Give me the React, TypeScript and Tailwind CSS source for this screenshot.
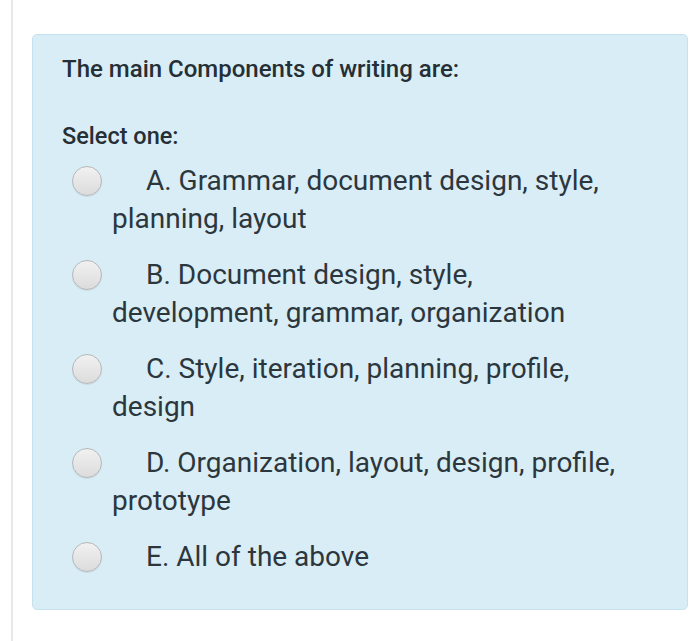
import React from 'react';

const OPTIONS = [
  { letter: 'A.', text: 'Grammar, document design, style, planning, layout' },
  { letter: 'B.', text: 'Document design, style, development, grammar, organization' },
  { letter: 'C.', text: 'Style, iteration, planning, profile, design' },
  { letter: 'D.', text: 'Organization, layout, design, profile, prototype' },
  { letter: 'E.', text: 'All of the above' },
];

const Radio: React.FC = () => (
  <span className="inline-block align-middle -ml-[40px] mr-[44px] -mt-[4px] w-[30px] h-[30px] rounded-full border-[1.5px] border-[#b5b8ba] bg-gradient-to-b from-[#f1f1f1] to-[#dcdcdc] shadow-[0_1px_1px_rgba(0,0,0,0.08)]" />
);

const App: React.FC = () => {
  return (
    <div className="min-h-[641px] w-[696px] bg-white flex" style={{ fontFamily: 'Roboto, "Noto Sans", sans-serif' }}>
      <div className="ml-[11px] w-[2px] bg-[#e8e8e8] shrink-0" />
      <div className="ml-[19px] mt-[34px] mb-auto w-[656px] rounded-[5px] border border-[#c6e2ee] bg-[#d9edf6] pl-[29px] pr-[60px] pt-[19px] pb-[33px] text-[#2c373d]">
        <h2 className="text-[24px] leading-[30px] font-medium text-[#252f35]">The main Components of writing are:</h2>
        <p className="mt-[38px] text-[23.5px] leading-[28px] font-medium text-[#252f35]">Select one:</p>
        <div className="mt-[12px] flex flex-col gap-[18px]">
          {OPTIONS.map((o) => (
            <div key={o.letter} className="pl-[50px] text-[28px] leading-[38px]">
              <Radio />
              <span>{o.letter} {o.text}</span>
            </div>
          ))}
        </div>
      </div>
    </div>
  );
};

export default App;
